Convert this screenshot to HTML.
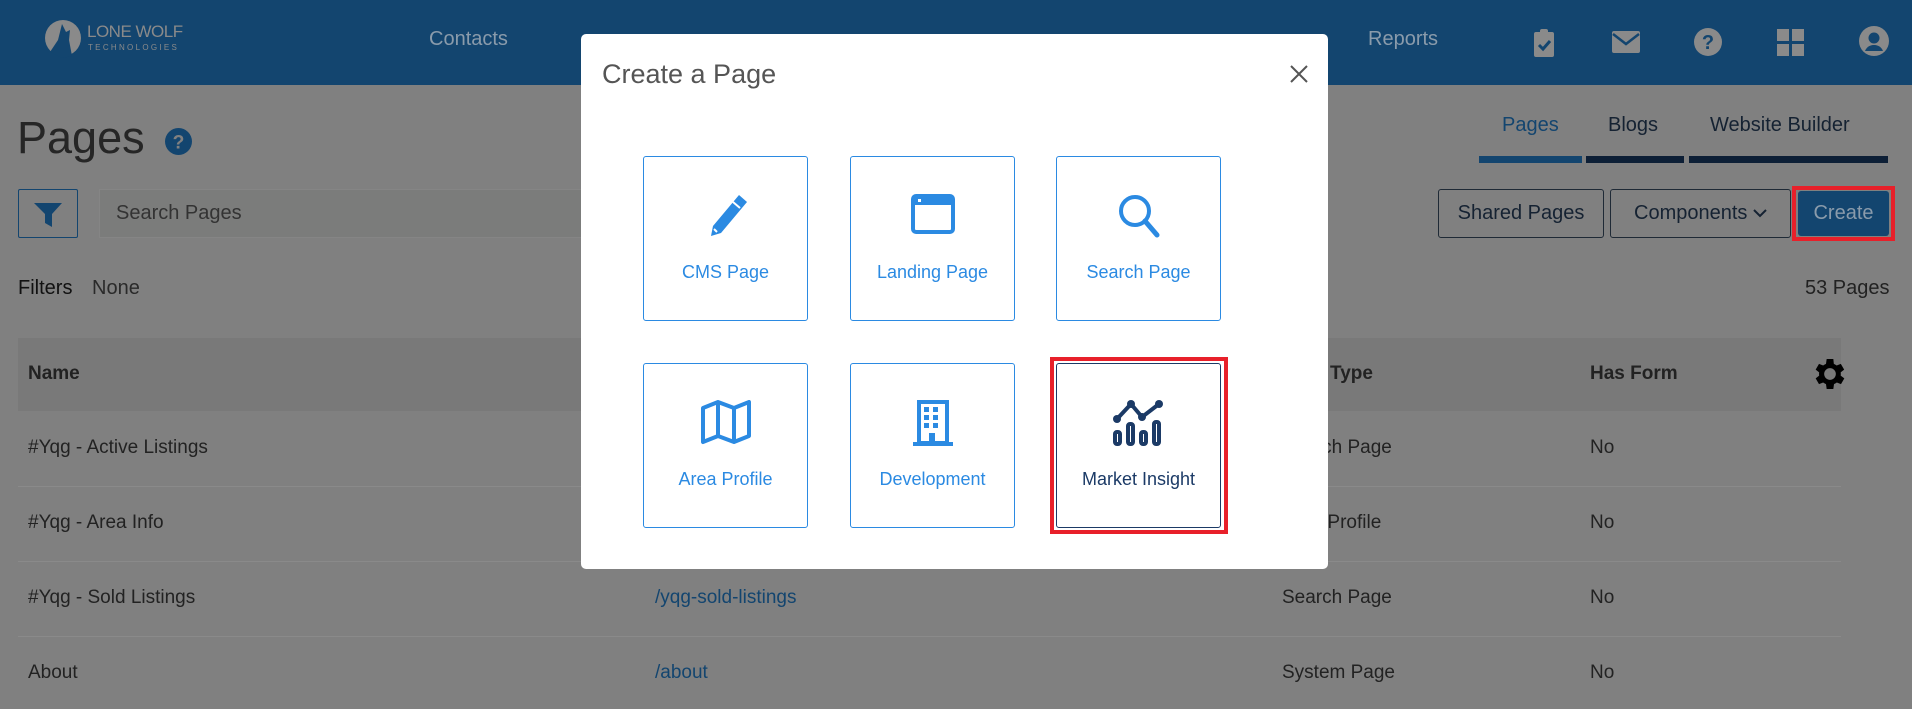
<!DOCTYPE html>
<html><head><meta charset="utf-8"><style>
*{box-sizing:border-box;margin:0;padding:0}
body{width:1912px;height:709px;overflow:hidden;background:#808080;font-family:"Liberation Sans",sans-serif;position:relative;color:#1f1f1f}
.a{position:absolute}
.hdr{left:0;top:0;width:1912px;height:85px;background:#13456f}
.nav{color:#8a9bab;font-size:20px;top:28px}
.tx{white-space:nowrap}
.row{left:18px;width:1823px;height:1px;background:#8a8a8a}
.cell{font-size:19px;color:#222;white-space:nowrap}
.btn{top:189px;height:49px;border:1px solid #1f2a36;border-radius:3px;font-size:20px;color:#152232;display:flex;align-items:center;justify-content:center}
.card{width:165px;height:165px;border:1px solid #2b8ae2;border-radius:3px;background:#fff}
.lbl{position:absolute;left:0;right:0;text-align:center;font-size:18px;color:#2b8ae2;top:105px}
.ic{position:absolute;left:50%;transform:translateX(-50%);top:36px}
</style></head><body>
<div class="a hdr"></div>
<svg class="a" style="left:44px;top:18px" width="40" height="42" viewBox="0 0 40 42"><circle cx="19" cy="20" r="18" fill="#8a8a8a"/><path d="M6 34 L14 22 L18 6 L22 14 L26 12 L25 22 L28 38 L18 40Z" fill="#13456f"/></svg>
<div class="a tx" style="left:87px;top:22px;font-size:17px;color:#8a8a8a;letter-spacing:-0.5px">LONE WOLF</div>
<div class="a tx" style="left:88px;top:43px;font-size:8px;color:#8a8a8a;letter-spacing:2.3px">TECHNOLOGIES</div>
<div class="a nav tx" style="left:429px">Contacts</div>
<div class="a nav tx" style="left:1368px">Reports</div>
<svg class="a" style="left:1533px;top:28px" width="22" height="30" viewBox="0 0 22 30"><rect x="1" y="4" width="20" height="25" rx="2" fill="#8a8a8a"/><rect x="7" y="1" width="8" height="6" rx="2" fill="#8a8a8a"/><path d="M6 17l4 4 7-8" stroke="#13456f" stroke-width="3" fill="none"/></svg>
<svg class="a" style="left:1612px;top:31px" width="28" height="22" viewBox="0 0 28 22"><rect x="0" y="0" width="28" height="22" rx="2" fill="#8a8a8a"/><path d="M1 3l13 10 13-10" stroke="#13456f" stroke-width="2.5" fill="none"/></svg>
<svg class="a" style="left:1694px;top:28px" width="28" height="28" viewBox="0 0 28 28"><circle cx="14" cy="14" r="14" fill="#8a8a8a"/><text x="14" y="21" font-size="20" font-weight="bold" text-anchor="middle" fill="#13456f" font-family="Liberation Sans">?</text></svg>
<svg class="a" style="left:1777px;top:29px" width="27" height="27" viewBox="0 0 27 27"><rect x="0" y="0" width="12" height="12" fill="#8a8a8a"/><rect x="15" y="0" width="12" height="12" fill="#8a8a8a"/><rect x="0" y="15" width="12" height="12" fill="#8a8a8a"/><rect x="15" y="15" width="12" height="12" fill="#8a8a8a"/></svg>
<svg class="a" style="left:1859px;top:26px" width="30" height="30" viewBox="0 0 30 30"><circle cx="15" cy="15" r="15" fill="#8a8a8a"/><circle cx="15" cy="12" r="5.5" fill="#13456f"/><path d="M6 25c2-5 6-6 9-6s7 1 9 6" fill="#13456f"/></svg>

<div class="a tx" style="left:17px;top:112px;font-size:45px;color:#262626">Pages</div>
<svg class="a" style="left:165px;top:128px" width="27" height="27" viewBox="0 0 28 28"><circle cx="14" cy="14" r="14" fill="#13456f"/><text x="14" y="21" font-size="20" font-weight="bold" text-anchor="middle" fill="#808080" font-family="Liberation Sans">?</text></svg>

<div class="a" style="left:18px;top:189px;width:60px;height:49px;border:1px solid #13456f;border-radius:2px"></div>
<svg class="a" style="left:33px;top:202px" width="30" height="26" viewBox="0 0 30 26"><path d="M1 1h28L19 12v13l-7-4V12Z" fill="#13456f"/></svg>
<div class="a" style="left:99px;top:189px;width:500px;height:49px;background:#7b7c7b;border:1px solid #858585"></div>
<div class="a tx" style="left:116px;top:202px;font-size:20px;color:#333">Search Pages</div>

<div class="a tx" style="left:18px;top:277px;font-size:20px;color:#111">Filters</div>
<div class="a tx" style="left:92px;top:277px;font-size:20px;color:#2a2a2a">None</div>
<div class="a tx" style="left:1805px;top:277px;font-size:20px;color:#222">53 Pages</div>

<div class="a tx" style="left:1502px;top:114px;font-size:20px;color:#13456f">Pages</div>
<div class="a tx" style="left:1608px;top:114px;font-size:20px;color:#152232">Blogs</div>
<div class="a tx" style="left:1710px;top:114px;font-size:20px;color:#152232">Website Builder</div>
<div class="a" style="left:1479px;top:156px;width:103px;height:7px;background:#13456f"></div>
<div class="a" style="left:1586px;top:156px;width:98px;height:7px;background:#0d1f36"></div>
<div class="a" style="left:1689px;top:156px;width:199px;height:7px;background:#0d1f36"></div>

<div class="a btn" style="left:1438px;width:166px">Shared Pages</div>
<div class="a btn" style="left:1610px;width:181px">Components&nbsp;<svg width="14" height="9" viewBox="0 0 14 9"><path d="M1 1l6 6 6-6" stroke="#152232" stroke-width="2" fill="none"/></svg></div>
<div class="a" style="left:1792px;top:186px;width:103px;height:55px;border:4px solid #e8202a"></div>
<div class="a btn" style="left:1798px;width:91px;top:191px;height:45px;background:#13456f;border:none;color:#8a9bab">Create</div>

<div class="a" style="left:18px;top:338px;width:1823px;height:73px;background:#797979"></div>
<div class="a cell" style="left:28px;top:363px;font-weight:bold;color:#222">Name</div>
<div class="a cell" style="left:1330px;top:363px;font-weight:bold;color:#222">Type</div>
<div class="a cell" style="left:1590px;top:363px;font-weight:bold;color:#222">Has Form</div>
<svg class="a" style="left:1810px;top:354px" width="40" height="40" viewBox="0 0 24 24"><path fill="#000" d="M19.4 13a7.5 7.5 0 0 0 0-2l2.1-1.6-2-3.5-2.5 1a7 7 0 0 0-1.7-1L15 3h-4l-.4 2.9a7 7 0 0 0-1.7 1l-2.5-1-2 3.5L6.5 11a7.5 7.5 0 0 0 0 2l-2.1 1.6 2 3.5 2.5-1a7 7 0 0 0 1.7 1L11 21h4l.4-2.9a7 7 0 0 0 1.7-1l2.5 1 2-3.5ZM13 15.5a3.5 3.5 0 1 1 0-7 3.5 3.5 0 0 1 0 7Z" transform="translate(-1 0)"/></svg>

<div class="a cell" style="left:28px;top:437px">#Yqg - Active Listings</div>
<div class="a cell" style="left:1282px;top:437px">Search Page</div>
<div class="a cell" style="left:1590px;top:437px">No</div>
<div class="a row" style="top:486px"></div>
<div class="a cell" style="left:28px;top:512px">#Yqg - Area Info</div>
<div class="a cell" style="left:1282px;top:512px">Area Profile</div>
<div class="a cell" style="left:1590px;top:512px">No</div>
<div class="a row" style="top:561px"></div>
<div class="a cell" style="left:28px;top:587px">#Yqg - Sold Listings</div>
<div class="a cell" style="left:655px;top:587px;color:#13456f">/yqg-sold-listings</div>
<div class="a cell" style="left:1282px;top:587px">Search Page</div>
<div class="a cell" style="left:1590px;top:587px">No</div>
<div class="a row" style="top:636px"></div>
<div class="a cell" style="left:28px;top:662px">About</div>
<div class="a cell" style="left:655px;top:662px;color:#13456f">/about</div>
<div class="a cell" style="left:1282px;top:662px">System Page</div>
<div class="a cell" style="left:1590px;top:662px">No</div>

<div class="a" style="left:581px;top:34px;width:747px;height:535px;background:#fff;border-radius:5px"></div>
<div class="a tx" style="left:602px;top:59px;font-size:27px;color:#555">Create a Page</div>
<svg class="a" style="left:1290px;top:65px" width="18" height="18" viewBox="0 0 18 18"><path d="M1 1l16 16M17 1L1 17" stroke="#555" stroke-width="2"/></svg>

<div class="a card" style="left:643px;top:156px"><svg class="ic" width="46" height="46" viewBox="0 0 46 46"><path d="M36 2l8 7-26 31-10 3 2-10Z" fill="#2b8ae2"/><path d="M30 9l7 6" stroke="#fff" stroke-width="2"/><path d="M11 36l3 3" stroke="#fff" stroke-width="2"/></svg><div class="lbl">CMS Page</div></div>
<div class="a card" style="left:850px;top:156px"><svg class="ic" width="46" height="46" viewBox="0 0 46 46"><rect x="3" y="3" width="40" height="36" rx="3" fill="none" stroke="#2b8ae2" stroke-width="4"/><rect x="3" y="3" width="40" height="9" fill="#2b8ae2"/><rect x="8" y="6" width="3" height="3" fill="#fff"/></svg><div class="lbl">Landing Page</div></div>
<div class="a card" style="left:1056px;top:156px"><svg class="ic" width="46" height="46" viewBox="0 0 46 46"><circle cx="19" cy="18" r="14" fill="none" stroke="#2b8ae2" stroke-width="4"/><path d="M29 28l12 14" stroke="#2b8ae2" stroke-width="5" stroke-linecap="round"/></svg><div class="lbl">Search Page</div></div>

<div class="a card" style="left:643px;top:363px"><svg class="ic" width="52" height="46" viewBox="0 0 52 46"><path d="M3 8l15-6 16 6 15-6v34l-15 6-16-6-15 6Z" fill="none" stroke="#2b8ae2" stroke-width="4" stroke-linejoin="round"/><path d="M18 2v34M34 8v34" stroke="#2b8ae2" stroke-width="4"/></svg><div class="lbl">Area Profile</div></div>
<div class="a card" style="left:850px;top:363px"><svg class="ic" width="46" height="46" viewBox="0 0 46 46"><rect x="7" y="0" width="32" height="46" fill="#2b8ae2"/><rect x="3" y="42" width="40" height="4" fill="#2b8ae2"/><rect x="11" y="4" width="24" height="37" fill="#fff"/><g fill="#2b8ae2"><rect x="14" y="7" width="5" height="5"/><rect x="23" y="7" width="5" height="5"/><rect x="14" y="15" width="5" height="5"/><rect x="23" y="15" width="5" height="5"/><rect x="14" y="23" width="5" height="5"/><rect x="23" y="23" width="5" height="5"/><rect x="19" y="33" width="6" height="10"/></g></svg><div class="lbl">Development</div></div>
<div class="a" style="left:1050px;top:357px;width:178px;height:177px;border:4px solid #e8202a"></div>
<div class="a card" style="left:1056px;top:363px;border-color:#1b3a66"><svg class="ic" width="54" height="46" viewBox="0 0 54 46"><path d="M5 19L19 4l11 13L47 4" stroke="#1b3a66" stroke-width="4" fill="none" stroke-linejoin="round"/><g fill="#1b3a66"><circle cx="5" cy="19" r="4"/><circle cx="19" cy="4" r="4"/><circle cx="30" cy="17" r="4"/><circle cx="47" cy="4" r="4"/></g><g fill="none" stroke="#1b3a66" stroke-width="4"><rect x="3" y="32" width="5" height="12" rx="2"/><rect x="16" y="24" width="5" height="20" rx="2"/><rect x="29" y="32" width="5" height="12" rx="2"/><rect x="42" y="22" width="5" height="22" rx="2"/></g></svg><div class="lbl" style="color:#1b3a66">Market Insight</div></div>
</body></html>
